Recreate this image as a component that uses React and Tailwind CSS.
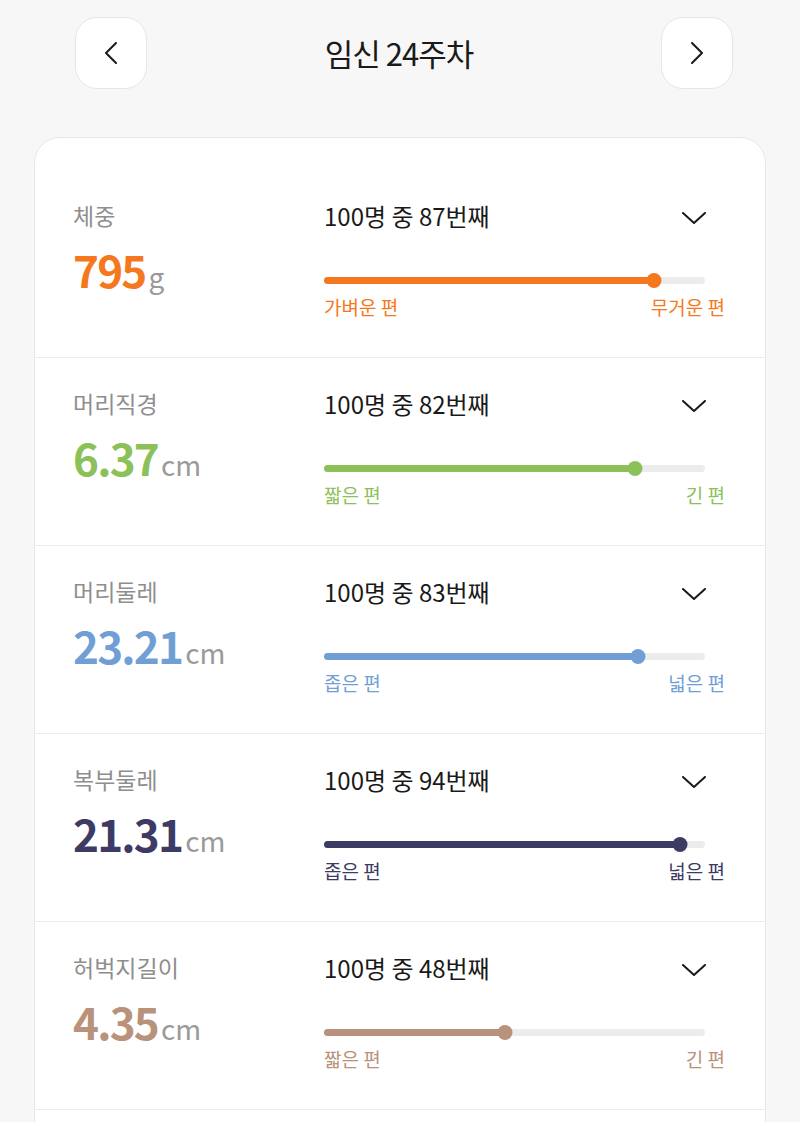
import React from 'react';

const rows = [
  { label: '체중', value: '795', unit: 'g', rank: 87, color: '#f5781e', low: '가벼운 편', high: '무거운 편' },
  { label: '머리직경', value: '6.37', unit: 'cm', rank: 82, color: '#8cc15a', low: '짧은 편', high: '긴 편' },
  { label: '머리둘레', value: '23.21', unit: 'cm', rank: 83, color: '#719fd5', low: '좁은 편', high: '넓은 편' },
  { label: '복부둘레', value: '21.31', unit: 'cm', rank: 94, color: '#3d3a63', low: '좁은 편', high: '넓은 편' },
  { label: '허벅지길이', value: '4.35', unit: 'cm', rank: 48, color: '#b8927a', low: '짧은 편', high: '긴 편' },
  { label: '상완길이', value: '4.02', unit: 'cm', rank: 51, color: '#e59aa6', low: '짧은 편', high: '긴 편' },
];

function Chevron({ dir }) {
  const points = dir === 'left' ? '11,1 1,11 11,21' : dir === 'right' ? '1,1 11,11 1,21' : '1,1 12,11 23,1';
  const size = dir === 'down' ? { w: 24, h: 13 } : { w: 12, h: 22 };
  return (
    <svg width={size.w} height={size.h} viewBox={`0 0 ${size.w} ${size.h}`} fill="none">
      <polyline points={points} stroke="#1a1a1a" strokeWidth="2" strokeLinecap="round" strokeLinejoin="round" />
    </svg>
  );
}

function Row({ item }) {
  const pct = item.rank - 0.5;
  return (
    <div className="h-[188px] border-b border-[#ececec] flex pl-[38px] pr-[40px] pt-[30px]">
      {/* left: name and value */}
      <div className="w-[251px] shrink-0">
        <div className="text-[23px] leading-[30px] text-[#8e8e8e]">{item.label}</div>
        <div className="mt-[13px] flex items-baseline">
          <span className="text-[44px] leading-[52px] font-bold tracking-[-1.8px]" style={{ color: item.color }}>
            {item.value}
          </span>
          <span className="ml-[3px] text-[28px] leading-[52px] text-[#9a9a9a]">{item.unit}</span>
        </div>
      </div>

      {/* right: rank and bar */}
      <div className="flex-1">
        <div className="h-8 flex items-center justify-between">
          <span className="text-[24px] leading-8 text-[#1a1a1a]">100명 중 {item.rank}번째</span>
          <span className="mr-[19px] mt-[5px] flex">
            <Chevron dir="down" />
          </span>
        </div>
        <div className="mt-[41px] mr-5 h-[14px] relative flex items-center">
          <div className="h-[7px] w-full rounded-full bg-[#ececec]" />
          <div
            className="absolute left-0 h-[7px] rounded-full"
            style={{ width: `${pct}%`, backgroundColor: item.color }}
          />
          <div
            className="absolute w-[15px] h-[15px] rounded-full -translate-x-1/2"
            style={{ left: `${pct}%`, backgroundColor: item.color }}
          />
        </div>
        <div className="mt-2 flex justify-between text-[19px] leading-6" style={{ color: item.color }}>
          <span>{item.low}</span>
          <span>{item.high}</span>
        </div>
      </div>
    </div>
  );
}

export default function App() {
  return (
    <div
      className="min-h-screen bg-[#f7f7f7] pb-10"
      style={{ fontFamily: '"Noto Sans CJK KR", "Noto Sans", sans-serif' }}
    >
      {/* header */}
      <div className="flex items-center pt-[17px] pl-[75px] pr-[67px]">
        <button className="w-[72px] h-[72px] rounded-[22px] bg-white border border-[#e6e6e6] flex items-center justify-center">
          <Chevron dir="left" />
        </button>
        <h1 className="flex-1 pr-[10px] text-center text-[31px] leading-10 text-[#1a1a1a] tracking-[-1px]">
          임신 24주차
        </h1>
        <button className="w-[72px] h-[72px] rounded-[22px] bg-white border border-[#e6e6e6] flex items-center justify-center">
          <Chevron dir="right" />
        </button>
      </div>

      {/* measurements card */}
      <div className="mx-[34px] mt-[48px] rounded-[26px] bg-white border border-[#e8e8e8] pt-[32px] overflow-hidden">
        {rows.map((item) => (
          <Row key={item.label} item={item} />
        ))}
      </div>
    </div>
  );
}
